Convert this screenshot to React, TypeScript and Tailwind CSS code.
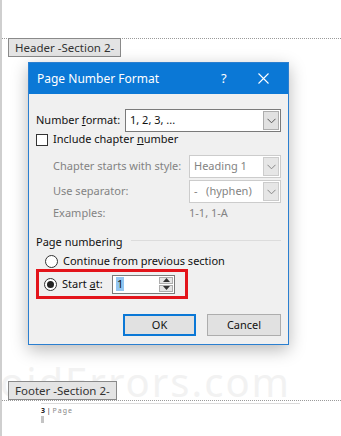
import { ReactNode } from 'react'

const ui = { fontFamily: '"Noto Sans", "Open Sans", Arial, sans-serif' }

function Chevron({ color = '#555' }: { color?: string }) {
  return (
    <svg width="9" height="6" viewBox="0 0 9 6" fill="none">
      <path d="M0.5 0.8 L4.5 4.8 L8.5 0.8" stroke={color} strokeWidth="1" />
    </svg>
  )
}

function Select({ value, disabled = false }: { value: ReactNode; disabled?: boolean }) {
  return (
    <div
      className={
        'flex h-full flex-1 items-stretch border bg-white ' +
        (disabled ? 'border-[#cccccc] text-[#838383]' : 'border-[#7a7a7a] text-[#111]')
      }
    >
      <div className="flex flex-1 items-center whitespace-pre pl-[4px]">{value}</div>
      <div
        className={
          'm-px flex w-[16px] items-center justify-center border ' +
          (disabled ? 'border-[#cccccc] bg-[#e6e6e6]' : 'border-[#adadad] bg-[#e1e1e1]')
        }
      >
        <Chevron color={disabled ? '#888' : '#555'} />
      </div>
    </div>
  )
}

function Radio({ checked = false }: { checked?: boolean }) {
  return (
    <div className="flex h-[13px] w-[13px] items-center justify-center rounded-full border border-[#333] bg-white">
      {checked && <div className="h-[7px] w-[7px] rounded-full bg-[#222]" />}
    </div>
  )
}

function Dialog() {
  return (
    <div
      className="ml-[26px] mt-[5px] w-[261px] border border-[#2b7fd0] bg-[#f0f0f0] text-[11px] text-[#111] shadow-[0_5px_16px_rgba(0,0,0,0.28)]"
      style={ui}
    >
      <div className="flex h-[31px] items-center bg-[#0b78d6] pl-[8px] text-white">
        <span className="flex-1 text-[12px]">Page Number Format</span>
        <span className="w-[20px] text-[13px]">?</span>
        <svg className="ml-[17px] mr-[19px]" width="11" height="11" viewBox="0 0 11 11">
          <path d="M0.5 0.5 L10.5 10.5 M10.5 0.5 L0.5 10.5" stroke="white" strokeWidth="1.1" />
        </svg>
      </div>

      <div className="px-[7px] pb-[8px] pt-[15px]">
        <div className="flex h-[23px] items-center">
          <span className="w-[89px]">
            Number <span className="underline">f</span>ormat:
          </span>
          <Select value="1, 2, 3, ..." />
        </div>

        <div className="mt-[1px] flex h-[13px] items-center">
          <div className="h-[12px] w-[12px] border border-[#333] bg-white" />
          <span className="ml-[5px]">
            Include chapter <span className="underline">n</span>umber
          </span>
        </div>

        <div className="mt-[9px] flex flex-col gap-[2px] pl-[17px] text-[#838383]">
          <div className="flex h-[23px] items-center">
            <span className="w-[136px]">Chapter starts with style:</span>
            <Select value="Heading 1" disabled />
          </div>
          <div className="flex h-[23px] items-center">
            <span className="w-[136px]">Use separator:</span>
            <Select value="-   (hyphen)" disabled />
          </div>
          <div className="flex h-[16px] items-center">
            <span className="w-[136px]">Examples:</span>
            <span>1-1, 1-A</span>
          </div>
        </div>

        <div className="mt-[13px] flex h-[16px] items-center">
          <span>Page numbering</span>
          <div className="ml-[9px] mb-[3px] h-px flex-1 bg-[#dcdcdc]" />
        </div>

        <div className="mt-[4px] flex h-[15px] items-center pl-[9px]">
          <Radio />
          <span className="ml-[5px]">Continue from previous section</span>
        </div>

        <div className="flex h-[30px] w-[152px] items-center border-[3px] border-[#e3141b] pl-[5px]">
          <Radio checked />
          <span className="ml-[5px] w-[50px]">
            Start <span className="underline">a</span>t:
          </span>
          <div className="flex h-[19px] w-[63px] items-stretch border border-[#7a7a7a] bg-white">
            <div className="flex flex-1 items-center pl-[3px]">
              <span className="bg-[#93c6f1] px-px leading-[14px]">1</span>
            </div>
            <div className="m-px flex w-[14px] flex-col gap-px">
              <div className="flex flex-1 items-center justify-center border border-[#adadad] bg-[#e5e5e5]">
                <svg width="7" height="4" viewBox="0 0 7 4">
                  <path d="M0 4 L3.5 0 L7 4 Z" fill="#333" />
                </svg>
              </div>
              <div className="flex flex-1 items-center justify-center border border-[#adadad] bg-[#e5e5e5]">
                <svg width="7" height="4" viewBox="0 0 7 4">
                  <path d="M0 0 L3.5 4 L7 0 Z" fill="#333" />
                </svg>
              </div>
            </div>
          </div>
        </div>

        <div className="mt-[15px] flex h-[22px] justify-end gap-[11px]">
          <button className="w-[73px] border-2 border-[#0b78d6] bg-[#e1e1e1]">OK</button>
          <button className="w-[74px] border border-[#adadad] bg-[#e1e1e1]">Cancel</button>
        </div>
      </div>
    </div>
  )
}

function Tab({ children }: { children: ReactNode }) {
  return (
    <div
      className="ml-[6px] flex h-[19px] w-fit items-center border border-[#8a8a8a] bg-[#e4e4e4] px-[6px] text-[11.5px] text-[#333]"
      style={ui}
    >
      {children}
    </div>
  )
}

export default function App() {
  return (
    <div className="relative flex h-[436px] w-[341px] flex-col overflow-hidden border-l-2 border-[#cfcfcf] bg-white">
      <div
        className="pointer-events-none absolute left-[-2px] top-[362px] text-[40px] leading-none tracking-[2px] text-[#f2f2f2]"
        style={ui}
      >
        oidErrors.com
      </div>

      <div className="mt-[38px] border-t border-dotted border-[#9a9a9a]" />
      <div className="-mt-px">
        <Tab>Header -Section 2-</Tab>
      </div>

      <Dialog />

      <div className="relative mt-[36px]">
        <Tab>Footer -Section 2-</Tab>
      </div>
      <div className="border-t border-dotted border-[#9a9a9a]" />

      <div className="ml-[39px] mt-[2px] w-[259px] border-t border-[#dadada] pt-[2px]">
        <div className="text-[7px] leading-[9px] text-[#222]" style={ui}>
          <span className="font-bold">3</span> | <span className="tracking-[1px] text-[#888]">Page</span>
        </div>
        <div className="mt-[1px] h-[7px] w-[3px] bg-[#c4c4c4]" />
      </div>
    </div>
  )
}
